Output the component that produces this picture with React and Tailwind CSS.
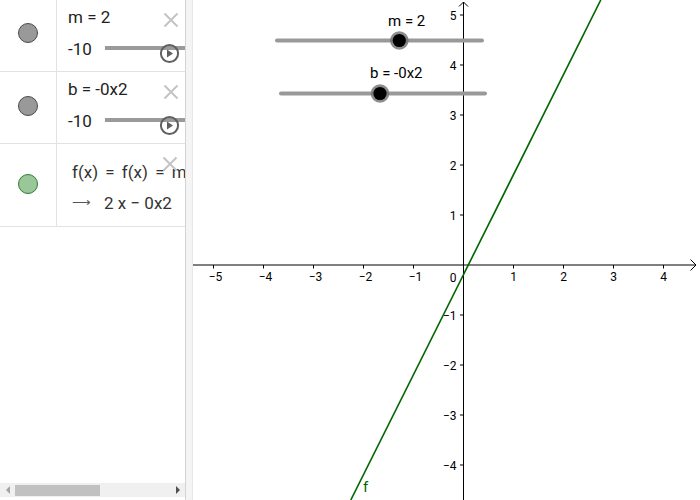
import React from "react";

function CloseIcon({ className }) {
  return (
    <svg className={className} width="16" height="16" viewBox="0 0 16 16">
      <path d="M1.5 1.5 L14.5 14.5 M14.5 1.5 L1.5 14.5" stroke="#c4c4c4" strokeWidth="2" fill="none" />
    </svg>
  );
}

function PlayIcon({ className }) {
  return (
    <svg className={className} width="21" height="21" viewBox="0 0 21 21">
      <circle cx="10.5" cy="10.5" r="8.6" stroke="#5f5f5f" strokeWidth="2" fill="white" fillOpacity="0" />
      <path d="M8 6.6 L14 10.5 L8 14.4 Z" fill="#5f5f5f" />
    </svg>
  );
}

function SliderRow({ label, circleTop }) {
  return (
    <div className="flex h-[72px] border-b border-[#e2e2e2]">
      <div className="w-[57px] shrink-0 border-r border-[#e2e2e2] flex justify-center" style={{ paddingTop: circleTop }}>
        <div className="w-[20px] h-[20px] rounded-full bg-[#999999] border border-[#4a4a4a]" />
      </div>
      <div className="relative flex-1 pl-[11px] pt-[7px] text-[17px] leading-[20px] text-[#222]">
        <div className="whitespace-nowrap">{label}</div>
        <div className="flex items-center mt-[12px]">
          <span className="w-[37px]">-10</span>
          <div className="flex-1 h-[4px] bg-[#9a9a9a] mt-[-3px]" />
        </div>
        <CloseIcon className="absolute left-[106px] top-[12px]" />
        <PlayIcon className="absolute left-[102px] top-[43px]" />
      </div>
    </div>
  );
}

function Graphics() {
  const ox = 463.5;
  const oy = 265;
  const u = 50;
  const xs = [-5, -4, -3, -2, -1, 1, 2, 3, 4];
  const ys = [-4, -3, -2, -1, 1, 2, 3, 4, 5];
  const font = { fontFamily: "Roboto, sans-serif" };
  return (
    <svg className="flex-1 h-full" viewBox="193 0 507 500" width="507" height="500">
      {/* axes */}
      <line x1="193" y1={oy} x2="696" y2={oy} stroke="#000" strokeWidth="1" />
      <polyline points="690.5,259.5 696,265 690.5,270.5" stroke="#000" fill="none" strokeWidth="1" />
      <line x1={ox} y1="500" x2={ox} y2="2" stroke="#000" strokeWidth="1" />
      <polyline points="459,6.5 463.5,2 468,6.5" stroke="#000" fill="none" strokeWidth="1" />
      {xs.map((k) => (
        <g key={"x" + k}>
          <line x1={ox + k * u} y1={oy} x2={ox + k * u} y2={oy + 3.5} stroke="#000" />
          <text x={ox + k * u + (k < 0 ? 2 : 0)} y="281" textAnchor="middle" fontSize="12" fill="#000" style={font}>
            {k < 0 ? "\u2212" + -k : k}
          </text>
        </g>
      ))}
      {ys.map((k) => (
        <g key={"y" + k}>
          <line x1={ox - 3.5} y1={oy - k * u} x2={ox} y2={oy - k * u} stroke="#000" />
          <text x="456.5" y={oy - k * u + 4.5} textAnchor="end" fontSize="12" fill="#000" style={font}>
            {k < 0 ? "\u2212" + -k : k}
          </text>
        </g>
      ))}
      <text x="456.5" y="281.5" textAnchor="end" fontSize="12" fill="#000" style={font}>0</text>

      {/* f(x) = 2x - 0.2 */}
      <line x1="600.8" y1="0" x2="350.8" y2="500" stroke="#006400" strokeWidth="1.6" />
      <text x="363" y="492" fontSize="15" fill="#006400" style={font}>f</text>

      {/* slider m */}
      <line x1="277" y1="40.5" x2="482" y2="40.5" stroke="#999" strokeWidth="4" strokeLinecap="round" />
      <circle cx="399.3" cy="40.5" r="9.3" fill="#6f6f6f" fillOpacity="0.8" />
      <circle cx="399.3" cy="40.5" r="6.6" fill="#000" />
      <text x="388" y="26" fontSize="15" fill="#000" style={font}>m = 2</text>

      {/* slider b */}
      <line x1="281" y1="93.5" x2="485" y2="93.5" stroke="#999" strokeWidth="4" strokeLinecap="round" />
      <circle cx="380" cy="93.5" r="9.3" fill="#6f6f6f" fillOpacity="0.8" />
      <circle cx="380" cy="93.5" r="6.6" fill="#000" />
      <text x="370" y="78" fontSize="15" fill="#000" style={font}>b = -0x2</text>
    </svg>
  );
}

export default function App() {
  return (
    <div className="flex w-[700px] h-[500px] bg-white overflow-hidden font-['Roboto',sans-serif]">
      {/* algebra view */}
      <div className="w-[185px] shrink-0 h-full flex flex-col overflow-hidden">
        <SliderRow label="m = 2" circleTop={23} />
        <SliderRow label="b = -0x2" circleTop={24} />
        <div className="flex h-[83px] border-b border-[#e2e2e2]">
          <div className="w-[57px] shrink-0 border-r border-[#e2e2e2] flex justify-center pt-[30px]">
            <div className="w-[20px] h-[20px] rounded-full bg-[#99c799] border border-[#2f7f2f]" />
          </div>
          <div className="relative flex-1 min-w-0 overflow-hidden pl-[15px] pt-[18px] text-[17px] leading-[20px] text-[#333] whitespace-nowrap">
            <div className="[word-spacing:3px]">f(x) = f(x) = m</div>
            <div className="flex items-center mt-[11px]">
              <span className="w-[32px] text-[#555] text-[13px]">⟶</span>
              <span>2 x − 0x2</span>
            </div>
            <CloseIcon className="absolute left-[105px] top-[12px]" />
          </div>
        </div>
        <div className="flex-1" />
        <div className="h-[14px] mb-[3px] bg-[#f0f0f0] flex items-center">
          <div className="w-[15px] flex justify-center">
            <div className="w-0 h-0 border-y-[4px] border-y-transparent border-r-[4px] border-r-[#a3a3a3]" />
          </div>
          <div className="w-[85px] h-[11px] bg-[#c1c1c1]" />
          <div className="flex-1" />
          <div className="w-[15px] flex justify-center">
            <div className="w-0 h-0 border-y-[4px] border-y-transparent border-l-[4px] border-l-[#505050]" />
          </div>
        </div>
      </div>
      {/* splitter */}
      <div className="w-[8px] shrink-0 h-full bg-[#f4f4f4] border-l border-[#d4d4d4] border-r border-r-[#e8e8e8]" />
      <Graphics />
    </div>
  );
}
